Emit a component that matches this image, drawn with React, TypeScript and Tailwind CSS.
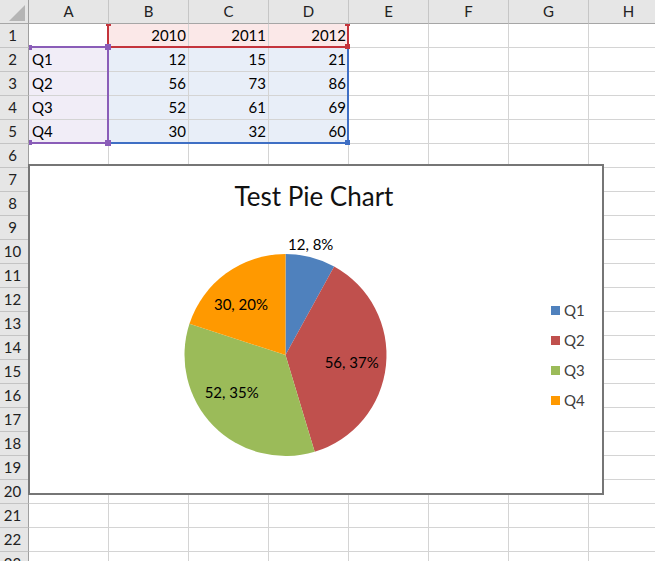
import React from "react";

const COLS = ["A", "B", "C", "D", "E", "F", "G", "H"];
const ROW_COUNT = 23;

const cells: Record<string, string> = {
  B1: "2010",
  C1: "2011",
  D1: "2012",
  A2: "Q1",
  B2: "12",
  C2: "15",
  D2: "21",
  A3: "Q2",
  B3: "56",
  C3: "73",
  D3: "86",
  A4: "Q3",
  B4: "52",
  C4: "61",
  D4: "69",
  A5: "Q4",
  B5: "30",
  C5: "32",
  D5: "60",
};

const slices = [
  { name: "Q1", value: 12, color: "#4f81bd", label: "12, 8%", lx: 280.7, ly: 37.6 },
  { name: "Q2", value: 56, color: "#c0504d", label: "56, 37%", lx: 321.7, ly: 156.4 },
  { name: "Q3", value: 52, color: "#9bbb59", label: "52, 35%", lx: 201.7, ly: 186 },
  { name: "Q4", value: 30, color: "#ff9900", label: "30, 20%", lx: 211, ly: 97.6 },
];

const FONT = { fontFamily: "Lato, 'Liberation Sans', sans-serif" };

function cellFill(col: string, row: number) {
  if (row === 1 && "BCD".includes(col)) return "bg-[#fbe8e8]";
  if (row >= 2 && row <= 5 && col === "A") return "bg-[#f1edf7]";
  if (row >= 2 && row <= 5 && "BCD".includes(col)) return "bg-[#e8eef8]";
  return "bg-white";
}

function PieChart() {
  const cx = 255.5;
  const cy = 143;
  const r = 101;
  const total = slices.reduce((s, x) => s + x.value, 0);
  const pt = (deg: number) => {
    const a = (deg * Math.PI) / 180;
    return [cx + r * Math.sin(a), cy - r * Math.cos(a)];
  };
  let start = 0;
  return (
    <svg width="500" height="279" viewBox="0 0 500 279" className="shrink-0">
      {slices.map((s) => {
        const sweep = (s.value / total) * 360;
        const [x0, y0] = pt(start);
        const [x1, y1] = pt(start + sweep);
        start += sweep;
        const large = sweep > 180 ? 1 : 0;
        return (
          <path
            key={s.name}
            d={`M ${cx} ${cy} L ${x0} ${y0} A ${r} ${r} 0 ${large} 1 ${x1} ${y1} Z`}
            fill={s.color}
          />
        );
      })}
      {slices.map((s) => (
        <text
          key={s.label}
          x={s.lx}
          y={s.ly}
          textAnchor="middle"
          fontSize="15"
          fill="#000"
          style={FONT}
        >
          {s.label}
        </text>
      ))}
    </svg>
  );
}

// selection handle square
function Handle({ className }: { className: string }) {
  return <span className={`absolute ${className}`} />;
}

export default function App() {
  return (
    <div className="relative h-[561px] w-[655px] overflow-hidden bg-white text-[15px] text-black" style={FONT}>
      <div className="grid grid-cols-[29px_repeat(8,80px)] auto-rows-[24px]">
        <div className="flex items-end justify-end border-r border-b border-r-[#9f9f9f] border-b-[#a6a6a6] bg-[#e6e6e6] pr-[3px] pb-[2px]">
          <svg width="16" height="16" viewBox="0 0 16 16">
            <path d="M16 0 L16 16 L0 16 Z" fill="#b5b5b5" />
          </svg>
        </div>
        {COLS.map((c) => (
          <div
            key={c}
            className="flex items-center justify-center border-r border-b border-r-[#c6c6c6] border-b-[#a6a6a6] bg-[#e6e6e6] text-[#222]"
          >
            {c}
          </div>
        ))}
        {Array.from({ length: ROW_COUNT }, (_, i) => i + 1).map((row) => (
          <React.Fragment key={row}>
            <div className="flex items-center justify-center border-r border-b border-r-[#9f9f9f] border-b-[#c4c4c4] bg-[#e6e6e6] pr-[3px] text-[#222]">
              {row}
            </div>
            {COLS.map((c) => {
              const v = cells[`${c}${row}`];
              const numeric = v !== undefined && /^\d+$/.test(v);
              return (
                <div
                  key={c}
                  className={`flex items-center border-r border-b border-[#d4d4d4] ${cellFill(c, row)} ${
                    numeric ? "justify-end pr-[2px]" : "justify-start pl-[3px]"
                  }`}
                >
                  {v}
                </div>
              );
            })}
          </React.Fragment>
        ))}
      </div>

      {/* blue range B2:D5 */}
      <div className="absolute left-[107px] top-[46px] h-[98px] w-[242px] border-r-2 border-b-2 border-[#3f6fc4]">
        <Handle className="-right-[3px] -bottom-[3px] h-[5px] w-[5px] bg-[#3f6fc4]" />
      </div>

      {/* red range B1:D1 */}
      <div className="absolute left-[107px] top-[24px] h-[24px] w-[242px] border-x-2 border-b-2 border-[#c4343c]">
        <Handle className="-left-[3px] top-0 h-[2px] w-[5px] bg-[#c4343c]" />
        <Handle className="-right-[3px] top-0 h-[2px] w-[5px] bg-[#c4343c]" />
        <Handle className="-right-[3px] -bottom-[3px] h-[5px] w-[5px] bg-[#c4343c]" />
      </div>

      {/* purple range A2:A5 */}
      <div className="absolute left-[29px] top-[46px] h-[98px] w-[80px] border-t-2 border-r-2 border-b-2 border-[#8a5db8]">
        <Handle className="left-0 -top-[3px] h-[5px] w-[3px] bg-[#8a5db8]" />
        <Handle className="left-0 -bottom-[3px] h-[5px] w-[3px] bg-[#8a5db8]" />
        <Handle className="-right-[4px] -top-[4px] h-[6px] w-[6px] bg-[#8a5db8]" />
        <Handle className="-right-[4px] -bottom-[4px] h-[6px] w-[6px] bg-[#8a5db8]" />
      </div>

      {/* chart */}
      <div className="absolute left-[28px] top-[164px] h-[331px] w-[576px] border-2 border-[#767676] bg-white">
        <div className="pt-[15px] pr-[4px] text-center text-[26px] leading-[31px] text-[#111]">
          Test Pie Chart
        </div>
        <div className="flex">
          <PieChart />
          <div className="ml-[21px] mt-[83px] flex flex-col text-[15px] text-[#404040]">
            {slices.map((s) => (
              <div key={s.name} className="flex h-[30px] items-center gap-[4px]">
                <span className="h-[9px] w-[9px]" style={{ backgroundColor: s.color }} />
                <span>{s.name}</span>
              </div>
            ))}
          </div>
        </div>
      </div>
    </div>
  );
}
